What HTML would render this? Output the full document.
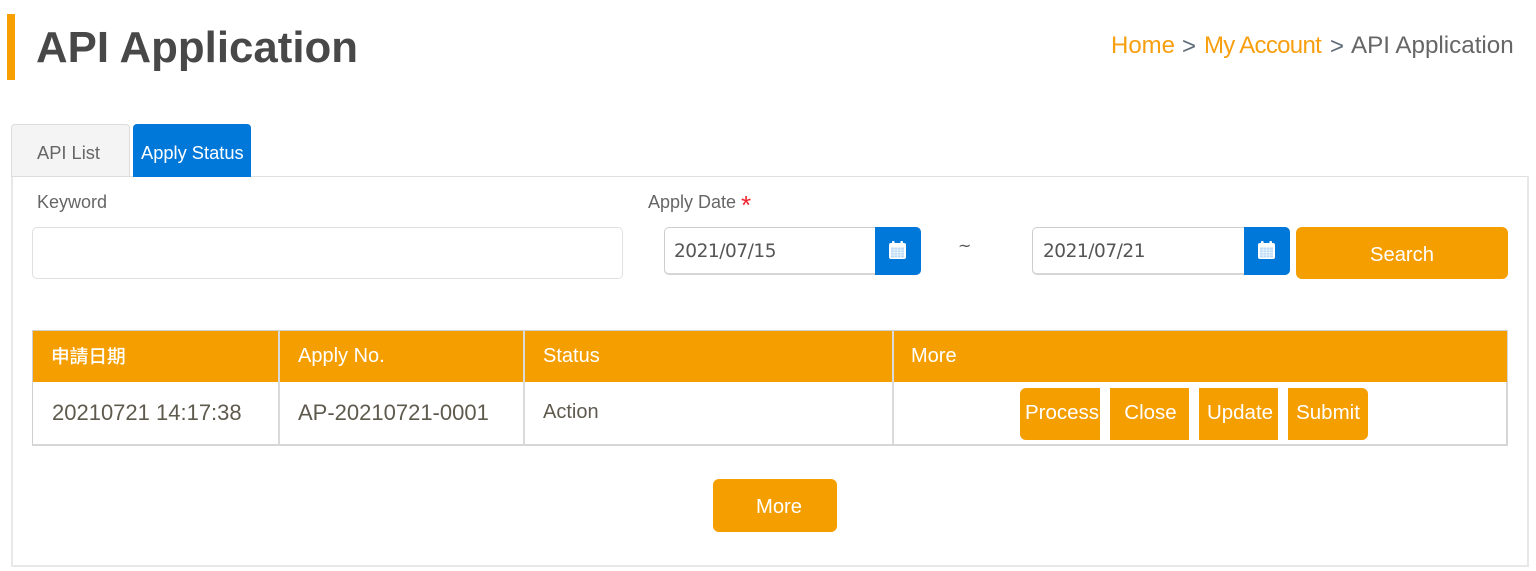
<!DOCTYPE html>
<html><head><meta charset="utf-8"><title>API Application</title>
<style>
html,body{margin:0;padding:0;background:#fff}
#p{position:relative;width:1536px;height:571px;overflow:hidden;background:#fff;font-family:"Liberation Sans","Noto Sans CJK TC",sans-serif;color:#666}
#p div{position:absolute;box-sizing:border-box;white-space:nowrap}
.o{background:#f59e00;color:#fff;text-align:center}
.t{line-height:1}
.cal{position:absolute;left:13px;top:13px}
.sep{top:331px;width:2px;height:114px;background:#dadada}
</style></head><body><div id="p">
<div style="left:7px;top:14px;width:8px;height:66px;background:#f79f00"></div>
<div class="t" style="left:36px;top:26px;font-size:43.8px;font-weight:bold;color:#484848">API Application</div>

<div class="t" style="left:1111px;top:34px;font-size:24px;color:#f79f0f">Home</div>
<div class="t" style="left:1182px;top:35px;font-size:24px;color:#5f6b78">&gt;</div>
<div class="t" style="left:1204px;top:34px;font-size:24px;color:#f79f0f;letter-spacing:-.7px">My Account</div>
<div class="t" style="left:1330px;top:35px;font-size:24px;color:#5f6b78">&gt;</div>
<div class="t" style="left:1351px;top:34px;font-size:24.2px;color:#666">API Application</div>

<div style="left:11px;top:176px;width:1518px;height:391px;border:2px solid #e8e8e8;border-top:1px solid #e0e0e0"></div>
<div style="left:11px;top:124px;width:119px;height:53px;background:#f4f4f4;border:1px solid #ddd;border-radius:4px 4px 0 0"></div>
<div class="t" style="left:37px;top:144px;font-size:18.3px;color:#666">API List</div>
<div style="left:133px;top:124px;width:118px;height:53px;background:#0078d9;border-radius:4px 4px 0 0"></div>
<div class="t" style="left:141px;top:144px;font-size:18.3px;color:#fff">Apply Status</div>

<div class="t" style="left:37px;top:193px;font-size:18px;color:#666">Keyword</div>
<div style="left:32px;top:227px;width:591px;height:52px;border:1px solid #e0e0e0;border-radius:5px;background:#fff"></div>
<div class="t" style="left:648px;top:193px;font-size:18px;color:#666">Apply Date</div>
<div class="t" style="left:741px;top:192px;font-size:26px;color:#f0202a">*</div>

<div style="left:664px;top:227px;width:257px;height:48px;border:1px solid #cdcdcd;border-bottom:2px solid #d6d6d6;border-radius:5px;background:#fff"></div>
<div class="t" style="left:674px;top:243px;font-family:'DejaVu Sans',sans-serif;font-size:18.5px;letter-spacing:-.46px;color:#555">2021/07/15</div>
<div style="left:875px;top:227px;width:46px;height:48px;background:#0078d9;border-radius:0 5px 5px 0">
<svg class="cal" width="19" height="20" viewBox="0 0 19 20"><rect x="1" y="3" width="17" height="16" rx="2" fill="#fff"/><rect x="3" y="7.5" width="13" height="10" fill="#b9dbf7"/><rect x="4" y="1" width="2.6" height="4" rx="1" fill="#fff"/><rect x="12.4" y="1" width="2.6" height="4" rx="1" fill="#fff"/><path d="M3 10H16M3 12.5H16M3 15H16M6.2 7.5V17.5M9.5 7.5V17.5M12.8 7.5V17.5" stroke="#e6f2fc" stroke-width=".9" fill="none"/></svg></div>
<div class="t" style="left:958px;top:238px;font-family:'DejaVu Sans',sans-serif;font-size:16px;color:#555">~</div>

<div style="left:1032px;top:227px;width:258px;height:48px;border:1px solid #cdcdcd;border-bottom:2px solid #d6d6d6;border-radius:5px;background:#fff"></div>
<div class="t" style="left:1043px;top:243px;font-family:'DejaVu Sans',sans-serif;font-size:18.5px;letter-spacing:-.46px;color:#555">2021/07/21</div>
<div style="left:1244px;top:227px;width:46px;height:48px;background:#0078d9;border-radius:0 5px 5px 0">
<svg class="cal" width="19" height="20" viewBox="0 0 19 20"><rect x="1" y="3" width="17" height="16" rx="2" fill="#fff"/><rect x="3" y="7.5" width="13" height="10" fill="#b9dbf7"/><rect x="4" y="1" width="2.6" height="4" rx="1" fill="#fff"/><rect x="12.4" y="1" width="2.6" height="4" rx="1" fill="#fff"/><path d="M3 10H16M3 12.5H16M3 15H16M6.2 7.5V17.5M9.5 7.5V17.5M12.8 7.5V17.5" stroke="#e6f2fc" stroke-width=".9" fill="none"/></svg></div>
<div class="o" style="left:1296px;top:227px;width:212px;height:52px;border-radius:6px;font-size:20.2px;line-height:57px">Search</div>

<div style="left:32px;top:330px;width:1476px;height:116px;border:1px solid #cfcfcf;border-bottom:2px solid #d6d6d6;border-right:2px solid #d6d6d6;background:#fff"></div>
<div style="left:33px;top:331px;width:1474px;height:51px;background:#f59e00"></div>
<div class="sep" style="left:278px"></div>
<div class="sep" style="left:523px"></div>
<div class="sep" style="left:892px"></div>

<div class="t" style="left:51px;top:347px;font-size:18.7px;color:#fff;font-family:'Noto Sans CJK TC',sans-serif;font-weight:500">申請日期</div>
<div class="t" style="left:298px;top:346px;font-size:20px;color:#fff">Apply No.</div>
<div class="t" style="left:543px;top:346px;font-size:20px;color:#fff">Status</div>
<div class="t" style="left:911px;top:346px;font-size:20px;color:#fff">More</div>

<div class="t" style="left:52px;top:402px;font-size:22px;color:#5e5a4e">20210721 14:17:38</div>
<div class="t" style="left:298px;top:402px;font-size:22px;color:#5e5a4e">AP-20210721-0001</div>
<div class="t" style="left:543px;top:402px;font-size:20px;color:#5e5a4e">Action</div>

<div class="o" style="left:1020px;top:388px;width:80px;height:52px;border-radius:6px 0 0 6px;font-size:20.5px;line-height:50px;padding-left:4px">Process</div>
<div class="o" style="left:1110px;top:388px;width:79px;height:52px;font-size:20.5px;line-height:50px;padding-left:2px">Close</div>
<div class="o" style="left:1199px;top:388px;width:79px;height:52px;font-size:20.5px;line-height:50px;padding-left:3px">Update</div>
<div class="o" style="left:1288px;top:388px;width:80px;height:52px;border-radius:0 6px 6px 0;font-size:20.5px;line-height:50px">Submit</div>

<div class="o" style="left:713px;top:479px;width:124px;height:53px;border-radius:6px;font-size:20.2px;line-height:57px;padding-left:8px">More</div>
</div></body></html>
